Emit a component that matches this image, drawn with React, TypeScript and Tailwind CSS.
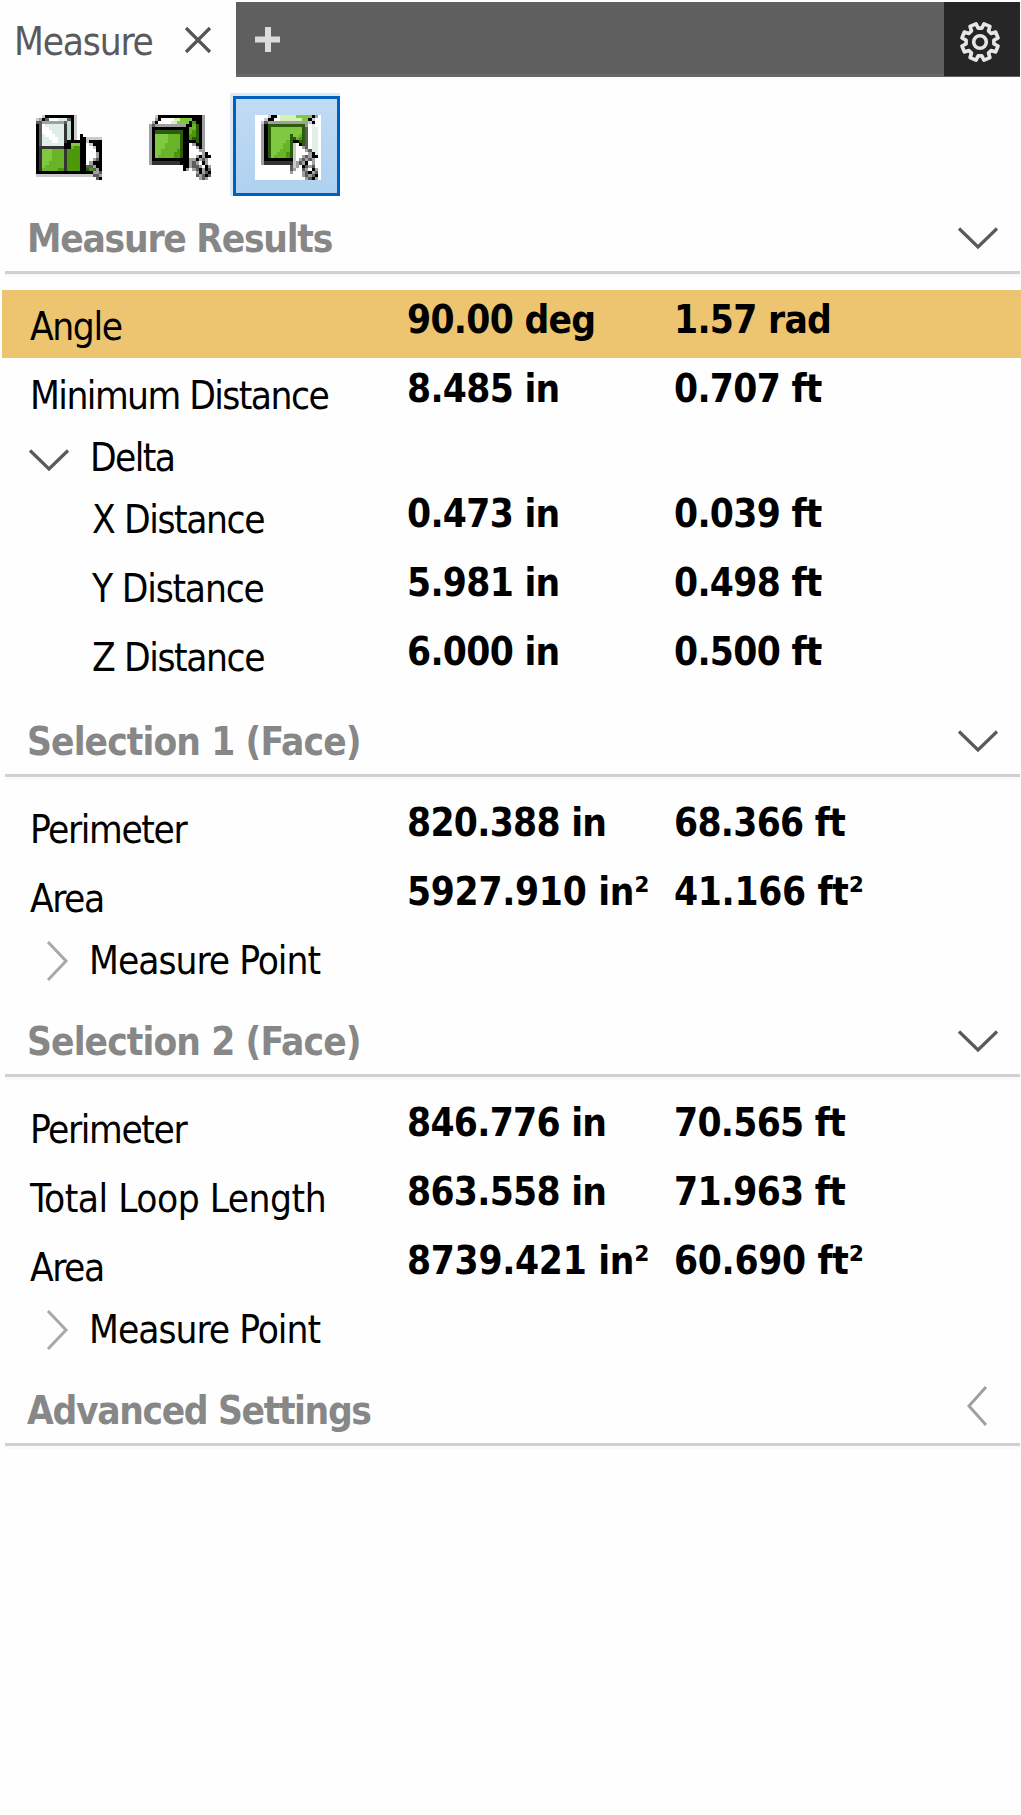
import type { ReactNode } from "react";

const palette: Record<string, string> = {
  k: "#000000",
  d: "#353335",
  h: "#5c5c5c",
  g: "#a0a0a0",
  l: "#cacaca",
  w: "#ffffff",
  m: "#dfeee6",
  n: "#bcdcca",
  v: "#d3f3b4",
  G: "#80c841",
  F: "#68b426",
  D: "#4c980a",
  E: "#2b5c0a",
};

// 21px toolbar bitmaps, one character for each pixel
const componentIcon = [
  "..lkkkkkkkkkl........",
  "lgkhwwwmmmhkl........",
  "hhggggggghnkl........",
  "khwmmmmmmdnkl........",
  "khwwmmmmmdnkl........",
  "khwwwmmmmdnkl........",
  "khmwwwmmmdnkl.k......",
  "khmmwwwmmdnkl.kklllll",
  "khmmmwwmmdkkkkkklkkkk",
  "khmmmmmmmkkGGGkkwlkkk",
  "kddddddddkkFDDkkwwlkk",
  "kdGGGFFFFdDDDDkkwwwkk",
  "kdGGGFFFFdDDDDkkwwwgk",
  "kdGGGFFFFdDDDDkkwwwgk",
  "kdGGGFFFFdDDDDkkwwghk",
  "kdGGFFFFFdDDDDkkwgkkk",
  "kdGFFFFFFdDDDDkkhhgkk",
  "kdFFFFFDDdDDDDkkEDhgk",
  "kkkkkkkkkkkkkkkkkkggh",
  "llllllllllllllllllhhg",
  "...................hk",
];

const partIcon = [
  "..lkkkkkkkkkkkkkkg..",
  "..gkwwwwvvGGGGkkkg..",
  ".gkwwwwvvGGGGkDkkg..",
  "ghggggggggggkkFEkg..",
  "gkkkkkkkkkkkkFFEkg..",
  "gkEEEEEEEEEkkFDEkg..",
  "gkGGGGFFFFEkkDDEkg..",
  "gkGGGGFFFFEkkDEEkg..",
  "gkGGGGFFFFEkkkkEkg..",
  "gkGGGFFFFFEkkwgkkg..",
  "gkGGGFFFFFEkkwwgkg..",
  "gkGGFFFFFDEkkwwwgg..",
  "gkGGFFFFDDEkkwwwwgk.",
  "gkGFFFFFDDEkkwwgkgkk",
  "gkkkkkkkkkkkkggkghg.",
  "gdddddddddkkkghgwkg.",
  "...........kkghhgwkg",
  "...........kg.ghkgkh",
  "...............gkghk",
  "...............hghkh",
  "................ghg.",
];

const faceIcon = [
  "wwwwlkkwvvvvvGGGGGkgw",
  "wwwlkkwwvvvvvvvGGklww",
  "wwlhggggggggggggglkww",
  "wwgkEEEEEEEEEEEEgwmww",
  "wwgkEGGGGGGGGGGEhwmmw",
  "wwgkEGGGGGGGGGGEhwmmw",
  "wwgkEGGGGGGEGGFEhwmmw",
  "wwgkEGGGGGGEEFDEhwmmw",
  "wwgkEGGGGGFEkkEEhwmmw",
  "wwgkEGGGGFFElwkEhwmmw",
  "wwgkEGGGGFFElwwghwmmw",
  "wwgkEGGGFFFElwwwghmmw",
  "wwgkEGGFFFDElwwwwgkmw",
  "wwgkEGFFFFDElwwghgkkw",
  "wwgkkkkkkkkklwghghgww",
  "wwgdddddddddlghgkwgww",
  "wwwwwwwwwwwhlgwkhghww",
  "wwwwwwwwwwwhgwwhgwkgw",
  "wwwwwwwwwwwgwwwghkghw",
  "wwwwwwwwwwwwwwwghghkw",
  "wwwwwwwwwwwwwwwwghkgw",
];

const PixelIcon = ({ rows, className }: { rows: string[]; className: string }) => (
  <svg
    viewBox={`0 0 ${rows[0].length} ${rows.length}`}
    preserveAspectRatio="none"
    shapeRendering="crispEdges"
    className={className}
  >
    {rows.map((row, y) =>
      row.split("").map((c, x) =>
        c === "." ? null : <rect key={`${x}-${y}`} x={x} y={y} width="1" height="1" fill={palette[c]} />
      )
    )}
  </svg>
);

// eight teeth, four points each
const gearPoints = Array.from({ length: 8 }, (_, i) => {
  const mid = 22.5 + i * 45;
  return [
    [mid - 15, 14],
    [mid - 10, 18.5],
    [mid + 10, 18.5],
    [mid + 15, 14],
  ]
    .map(([deg, r]) => {
      const a = (deg * Math.PI) / 180;
      return `${(21 + r * Math.cos(a)).toFixed(2)},${(21 + r * Math.sin(a)).toFixed(2)}`;
    })
    .join(" ");
}).join(" ");

const GearIcon = () => (
  <svg viewBox="0 0 42 42" className="w-[42px] h-[42px]" fill="none" stroke="#e6e6e6" strokeWidth="3.6">
    <polygon points={gearPoints} strokeLinejoin="round" />
    <circle cx="21" cy="21" r="6.3" />
  </svg>
);

const ChevronDown = () => (
  <svg viewBox="0 0 42 24" className="w-[42px] h-[24px] shrink-0" fill="none" stroke="#5a5a5a" strokeWidth="3.2">
    <path d="M2 2.500 L21 21 L40 2.500" />
  </svg>
);

const ChevronRight = () => (
  <svg viewBox="0 0 24 44" className="w-[24px] h-[44px] shrink-0" fill="none" stroke="#a8a8a8" strokeWidth="3">
    <path d="M3 3 L21 22 L3 41" />
  </svg>
);

const ChevronLeft = () => (
  <svg viewBox="0 0 24 44" className="w-[24px] h-[44px] shrink-0" fill="none" stroke="#a0a0a0" strokeWidth="3">
    <path d="M22 3 L5 22 L22 41" />
  </svg>
);

const SectionHeader = ({ title, tracking, collapsed }: { title: string; tracking: string; collapsed?: boolean }) => (
  <div className="h-[103px]">
    <div className="h-[84px] pl-[25px] flex justify-between">
      <h2 className={`pt-[27px] leading-[50px] font-bold text-[#878787] ${tracking}`}>{title}</h2>
      <div className={collapsed ? "pt-[25px] pr-[33px]" : "pt-[39px] pr-[22px]"}>
        {collapsed ? <ChevronLeft /> : <ChevronDown />}
      </div>
    </div>
    <div className="ml-[3px] mr-px h-[3px] bg-[#d0d0d0]" />
    <div className="ml-[3px] mr-px h-[3px] bg-[#f9f9f9]" />
  </div>
);

type RowProps = {
  label: string;
  tracking: string;
  values: [string, string];
  indent?: boolean;
  highlight?: boolean;
};

const ResultRow = ({ label, tracking, values, indent, highlight }: RowProps) => {
  const valueClass = `font-bold ${indent ? "pt-[6px]" : "pt-[5px]"} ${
    label === "Area" ? "tracking-[-0.3px]" : "tracking-[-0.7px]"
  }`;
  return (
    <div
      className={`h-[69px] flex leading-[50px] whitespace-nowrap ${highlight ? "bg-[#edc46f] bg-clip-content pb-px" : ""}`}
    >
      <div className={`w-[405px] pt-[12px] ${tracking} ${indent ? "pl-[90px]" : "pl-[28px]"}`}>{label}</div>
      <div className={`w-[267px] ${valueClass}`}>{values[0]}</div>
      <div className={valueClass}>{values[1]}</div>
    </div>
  );
};

const TreeRow = ({ icon, label, tracking, className }: { icon: ReactNode; label: string; tracking: string; className: string }) => (
  <div className={`flex items-center ${className}`}>
    {icon}
    <span className={`leading-[50px] ${tracking}`}>{label}</span>
  </div>
);

const App = () => {
  return (
    <div className="w-[1021px] h-[1815px] overflow-hidden bg-[#fefefe] pt-[2px] pl-[2px] text-black text-[38.5px] [font-family:'DejaVu_Sans_Condensed','DejaVu_Sans',sans-serif]">
      {/* tabs */}
      <div className="h-[75px] flex mr-px bg-[#5f5f5f]">
        <div className="w-[234px] h-full bg-[#fefefe] flex">
          <span className="pl-[12px] pt-[15px] w-[181px] leading-[50px] text-[#5a5a5a] tracking-[-1.2px]">Measure</span>
          <svg viewBox="0 0 30 30" className="w-[30px] h-[30px] mt-[22px]" stroke="#555" strokeWidth="3.2">
            <path d="M3 4 L27 28 M27 4 L3 28" />
          </svg>
        </div>
        <div className="flex-1 pl-[19px] pt-[25px] border-b-3 border-[#676767]">
          <svg viewBox="0 0 25 25" className="w-[25px] h-[25px]" fill="#dcdcdc">
            <path d="M10 0h6v9.500h9v6h-9v9.500h-6v-9.500h-10v-6h10z" />
          </svg>
        </div>
        <div className="w-[76px] h-[74px] bg-[#262626] flex items-center justify-center pt-[5px] pr-[4px]">
          <GearIcon />
        </div>
      </div>

      {/* selection filter buttons */}
      <div className="h-[110px] flex items-start">
        <PixelIcon rows={componentIcon} className="w-[66px] h-[65px] ml-[34px] mt-[38px]" />
        <PixelIcon rows={partIcon} className="w-[62px] h-[65px] ml-[47px] mt-[38px]" />
        <div className="ml-[19px] mt-[16px] w-[110px] h-[103px] shrink-0 pl-[3px] pt-[3px] bg-[#dce8f4]">
          <div className="w-[107px] h-[100px] border-3 border-[#0060c0] bg-linear-to-b from-[#c2dbf4] to-[#aed1f0] pl-[19px] pt-[16px]">
            <PixelIcon rows={faceIcon} className="w-[66px] h-[65px]" />
          </div>
        </div>
      </div>

      <SectionHeader title="Measure Results" tracking="tracking-[-1.25px]" />
      <ResultRow label="Angle" tracking="tracking-[-1.4px]" values={["90.00 deg", "1.57 rad"]} highlight />
      <ResultRow label="Minimum Distance" tracking="tracking-[-1.55px]" values={["8.485 in", "0.707 ft"]} />
      <TreeRow
        icon={<div className="pt-[5px]"><ChevronDown /></div>}
        label="Delta"
        tracking="tracking-[-1.6px]"
        className="h-[55px] pl-[26px] gap-[20px] pt-[4px]"
      />
      <ResultRow label="X Distance" tracking="tracking-[-1.4px]" values={["0.473 in", "0.039 ft"]} indent />
      <ResultRow label="Y Distance" tracking="tracking-[-1.2px]" values={["5.981 in", "0.498 ft"]} indent />
      <ResultRow label="Z Distance" tracking="tracking-[-1.4px]" values={["6.000 in", "0.500 ft"]} indent />

      <SectionHeader title="Selection 1 (Face)" tracking="tracking-[-0.9px]" />
      <ResultRow label="Perimeter" tracking="tracking-[-1.4px]" values={["820.388 in", "68.366 ft"]} />
      <ResultRow label="Area" tracking="tracking-[-1.5px]" values={["5927.910 in²", "41.166 ft²"]} />
      <TreeRow icon={<ChevronRight />} label="Measure Point" tracking="tracking-[-1px]" className="h-[59px] pl-[43px] gap-[20px]" />

      <SectionHeader title="Selection 2 (Face)" tracking="tracking-[-0.9px]" />
      <ResultRow label="Perimeter" tracking="tracking-[-1.4px]" values={["846.776 in", "70.565 ft"]} />
      <ResultRow label="Total Loop Length" tracking="tracking-[-0.5px]" values={["863.558 in", "71.963 ft"]} />
      <ResultRow label="Area" tracking="tracking-[-1.5px]" values={["8739.421 in²", "60.690 ft²"]} />
      <TreeRow icon={<ChevronRight />} label="Measure Point" tracking="tracking-[-1px]" className="h-[59px] pl-[43px] gap-[20px]" />

      <SectionHeader title="Advanced Settings" tracking="tracking-[-1.35px]" collapsed />
    </div>
  );
};

export default App;
